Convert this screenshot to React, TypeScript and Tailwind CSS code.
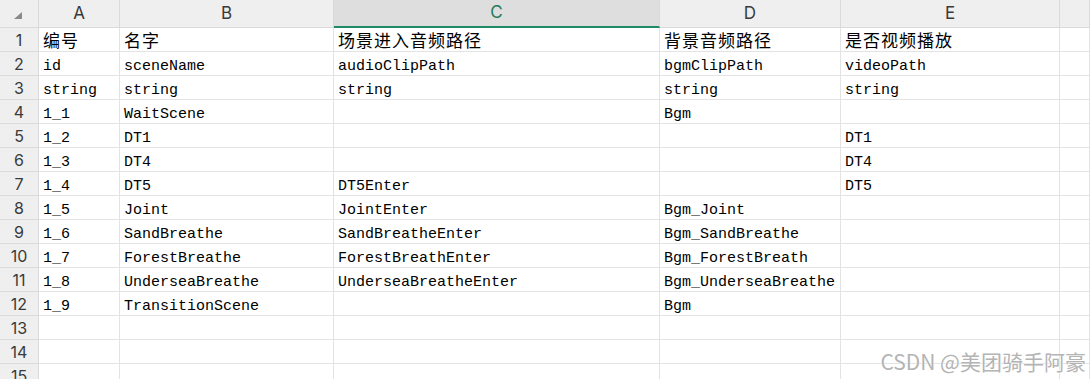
import React from 'react'

const cols = ['A', 'B', 'C', 'D', 'E', '']

const rows: string[][] = [
  ['编号', '名字', '场景进入音频路径', '背景音频路径', '是否视频播放'],
  ['id', 'sceneName', 'audioClipPath', 'bgmClipPath', 'videoPath'],
  ['string', 'string', 'string', 'string', 'string'],
  ['1_1', 'WaitScene', '', 'Bgm', ''],
  ['1_2', 'DT1', '', '', 'DT1'],
  ['1_3', 'DT4', '', '', 'DT4'],
  ['1_4', 'DT5', 'DT5Enter', '', 'DT5'],
  ['1_5', 'Joint', 'JointEnter', 'Bgm_Joint', ''],
  ['1_6', 'SandBreathe', 'SandBreatheEnter', 'Bgm_SandBreathe', ''],
  ['1_7', 'ForestBreathe', 'ForestBreathEnter', 'Bgm_ForestBreath', ''],
  ['1_8', 'UnderseaBreathe', 'UnderseaBreatheEnter', 'Bgm_UnderseaBreathe', ''],
  ['1_9', 'TransitionScene', '', 'Bgm', ''],
  ['', '', '', '', ''],
  ['', '', '', '', ''],
  ['', '', '', '', ''],
]

const gridCols = 'grid grid-cols-[39px_81px_214px_326px_181px_219px_1fr]'

export default function App() {
  return (
    <div className="relative w-[1090px] h-[379px] overflow-hidden bg-white">
      {/* column headers */}
      <div className={`${gridCols} grid-rows-[28px] h-[28px] bg-[#efefef] font-['Inter','Noto_Sans',sans-serif] text-[17px] text-[#3a3a3a]`}>
        <div className="relative border-r border-b border-[#dadada]">
          <div className="absolute left-[14px] top-[12px] w-0 h-0 border-l-[8px] border-l-transparent border-b-[7px] border-b-[#8a8a8a]" />
        </div>
        {cols.map((c, i) =>
          c === 'C' ? (
            <div key={i} className="flex items-center justify-center bg-[#dedede] border-r border-[#dadada] border-b-2 border-b-[#1f8a65] text-[#1f7a5a]">
              {c}
            </div>
          ) : (
            <div key={i} className="flex items-center justify-center border-r border-b border-[#dadada]">
              {c}
            </div>
          )
        )}
      </div>

      {/* body */}
      {rows.map((r, ri) => (
        <div key={ri} className={`${gridCols} grid-rows-[24px] h-[24px]`}>
          <div className="flex items-center justify-center bg-[#efefef] border-r border-b border-[#dadada] font-['Inter','Noto_Sans',sans-serif] text-[16px] leading-none text-[#3a3a3a]">
            {ri + 1}
          </div>
          {[...r, ''].map((v, ci) => (
            <div
              key={ci}
              className={`flex items-center pl-[4px] whitespace-nowrap border-r border-b border-[#e3e3e3] text-black font-['Liberation_Mono','Noto_Sans_CJK_SC',monospace] ${
                ri === 0 ? "text-[17px] leading-[21px] tracking-[1px] pb-[1px] font-['Noto_Sans_CJK_SC',sans-serif] text-[#222]" : 'text-[15px] leading-none pt-[6px]'
              }`}
            >
              {v}
            </div>
          ))}
        </div>
      ))}

      <div className="absolute right-[4px] bottom-[2px] font-['Noto_Sans_CJK_SC',sans-serif] text-[21px] text-[#b4b4b4] [text-shadow:0_0_1px_#fff,0_0_2px_#fff]">
        CSDN @美团骑手阿豪
      </div>
    </div>
  )
}
